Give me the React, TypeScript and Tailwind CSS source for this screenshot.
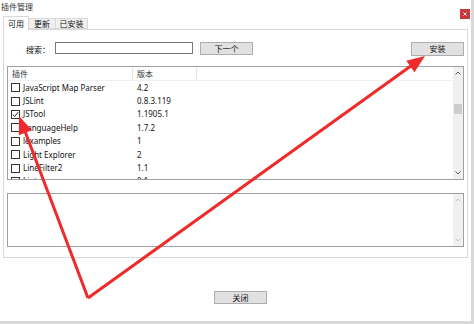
import React from "react";

const font = { fontFamily: '"Noto Sans", "Noto Sans CJK SC", sans-serif' };

const plugins = [
  { name: "JavaScript Map Parser", ver: "4.2" },
  { name: "JSLint", ver: "0.8.3.119" },
  { name: "JSTool", ver: "1.1905.1", checked: true },
  { name: "LanguageHelp", ver: "1.7.2" },
  { name: "lexamples", ver: "1" },
  { name: "Light Explorer", ver: "2" },
  { name: "LineFilter2", ver: "1.1" },
  { name: "Linter", ver: "0.1" },
];

const Btn = ({ label, className }: { label: string; className?: string }) => (
  <button
    className={
      "flex items-center justify-center bg-[#e1e1e1] border border-[#adadad] text-[8px] leading-none text-[#111] " +
      (className ?? "")
    }
  >
    {label}
  </button>
);

const Check = ({ on }: { on?: boolean }) => (
  <div className="w-[9px] h-[9px] border border-[#333] bg-white flex items-center justify-center shrink-0">
    {on && (
      <svg width="7" height="7" viewBox="0 0 7 7">
        <path d="M0.8 3.6 L2.7 5.4 L6.2 1.2" fill="none" stroke="#222" strokeWidth="1" />
      </svg>
    )}
  </div>
);

const Scroll = ({ thumb, disabled }: { thumb?: boolean; disabled?: boolean }) => {
  const c = disabled ? "#c4c4c4" : "#606060";
  return (
    <div className="w-[10px] bg-[#f0f0f0] flex flex-col items-center justify-between py-[4px] shrink-0">
      <svg width="6" height="4" viewBox="0 0 6 4">
        <path d="M0.5 3.5 L3 1 L5.5 3.5" fill="none" stroke={c} strokeWidth="1" />
      </svg>
      {thumb && <div className="w-[8px] h-[10px] bg-[#cdcdcd] -mt-[28px]" />}
      <svg width="6" height="4" viewBox="0 0 6 4">
        <path d="M0.5 0.5 L3 3 L5.5 0.5" fill="none" stroke={c} strokeWidth="1" />
      </svg>
    </div>
  );
};

// arrowhead triangle at (x2, y2), pointing away from (x1, y1)
function head(x1: number, y1: number, x2: number, y2: number) {
  const a = Math.atan2(y2 - y1, x2 - x1);
  const len = 18;
  const w = 7;
  const bx = x2 - Math.cos(a) * len;
  const by = y2 - Math.sin(a) * len;
  const px = -Math.sin(a) * w;
  const py = Math.cos(a) * w;
  return `${x2},${y2} ${bx + px},${by + py} ${bx - px},${by - py}`;
}

const Arrows = () => {
  const s = [88, 298];
  const t1 = [19, 116];
  const t2 = [425, 56];
  return (
    <svg className="absolute left-0 top-0 pointer-events-none" width="474" height="324">
      <line x1={s[0]} y1={s[1]} x2={t1[0] + 4} y2={t1[1] + 10} stroke="#ee2a2a" strokeWidth="3" />
      <polygon points={head(s[0], s[1], t1[0], t1[1])} fill="#ee2a2a" />
      <line x1={s[0]} y1={s[1]} x2={t2[0] - 10} y2={t2[1] + 7} stroke="#ee2a2a" strokeWidth="3" />
      <polygon points={head(s[0], s[1], t2[0], t2[1])} fill="#ee2a2a" />
    </svg>
  );
};

export default function App() {
  return (
    <div style={font} className="relative w-[474px] h-[324px] overflow-hidden bg-[#d9d9d9] text-[#111]">
      <div className="w-[471px] h-[321px] bg-white flex flex-col">
        {/* title bar */}
        <div className="h-[16px] flex justify-between">
          <div className="pl-[1px] pt-[2px] text-[8px] leading-[10px] text-[#333]">插件管理</div>
          <div className="mt-[9px] mr-[1px] w-[10px] h-[10px] bg-[#c8373b] flex items-center justify-center">
            <svg width="4" height="4" viewBox="0 0 4 4">
              <path d="M0.5 0.5 L3.5 3.5 M3.5 0.5 L0.5 3.5" stroke="#fff" strokeWidth="0.9" />
            </svg>
          </div>
        </div>

        {/* tabs */}
        <div className="flex items-end pl-[3px] h-[13px] text-[8px] leading-none">
          <div className="relative z-10 -mb-px w-[26px] h-[14px] bg-white border border-b-0 border-[#d9d9d9] flex items-center justify-center">
            可用
          </div>
          <div className="w-[27px] h-[11px] bg-[#f0f0f0] border border-l-0 border-[#d9d9d9] flex items-center justify-center">
            更新
          </div>
          <div className="w-[32px] h-[11px] bg-[#f0f0f0] border border-l-0 border-[#d9d9d9] flex items-center justify-center">
            已安装
          </div>
        </div>

        {/* panel */}
        <div className="mx-[3px] h-[229px] border border-[#d9d9d9] bg-white flex flex-col px-[3px] pt-[12px]">
          <div className="flex items-start h-[14px] text-[8px] leading-none">
            <div className="ml-[19px] mt-[4px] w-[29px]">搜索：</div>
            <div className="w-[138px] h-[12px] border border-[#7a7a7a] bg-white" />
            <Btn label="下一个" className="ml-[7px] w-[53px] h-[13px]" />
            <div className="flex-1" />
            <Btn label="安装" className="w-[53px] h-[14px]" />
          </div>

          {/* plugin list */}
          <div className="mt-[10px] h-[114px] border border-[#a0a0a0] flex overflow-hidden text-[8px]">
            <div className="flex-1 overflow-hidden">
              <div className="flex h-[14px] items-center text-[#333] border-b border-[#f0f0f0]">
                <div className="w-[125px] pl-[4px] border-r border-[#e5e5e5] h-full flex items-center">插件</div>
                <div className="w-[64px] pl-[4px] border-r border-[#e5e5e5] h-full flex items-center">版本</div>
              </div>
              {plugins.map((p) => (
                <div key={p.name} className="flex h-[13.4px] items-center">
                  <div className="w-[125px] pl-[3px] flex items-center gap-[3px]">
                    <Check on={p.checked} />
                    <span>{p.name}</span>
                  </div>
                  <div className="pl-[4px]">{p.ver}</div>
                </div>
              ))}
            </div>
            <Scroll thumb />
          </div>

          {/* description box */}
          <div className="mt-[13px] h-[54px] border border-[#a0a0a0] flex">
            <div className="flex-1" />
            <Scroll disabled />
          </div>
        </div>

        <div className="mt-[33px] pl-[214px]">
          <Btn label="关闭" className="w-[53px] h-[13px]" />
        </div>
      </div>
      <Arrows />
    </div>
  );
}
